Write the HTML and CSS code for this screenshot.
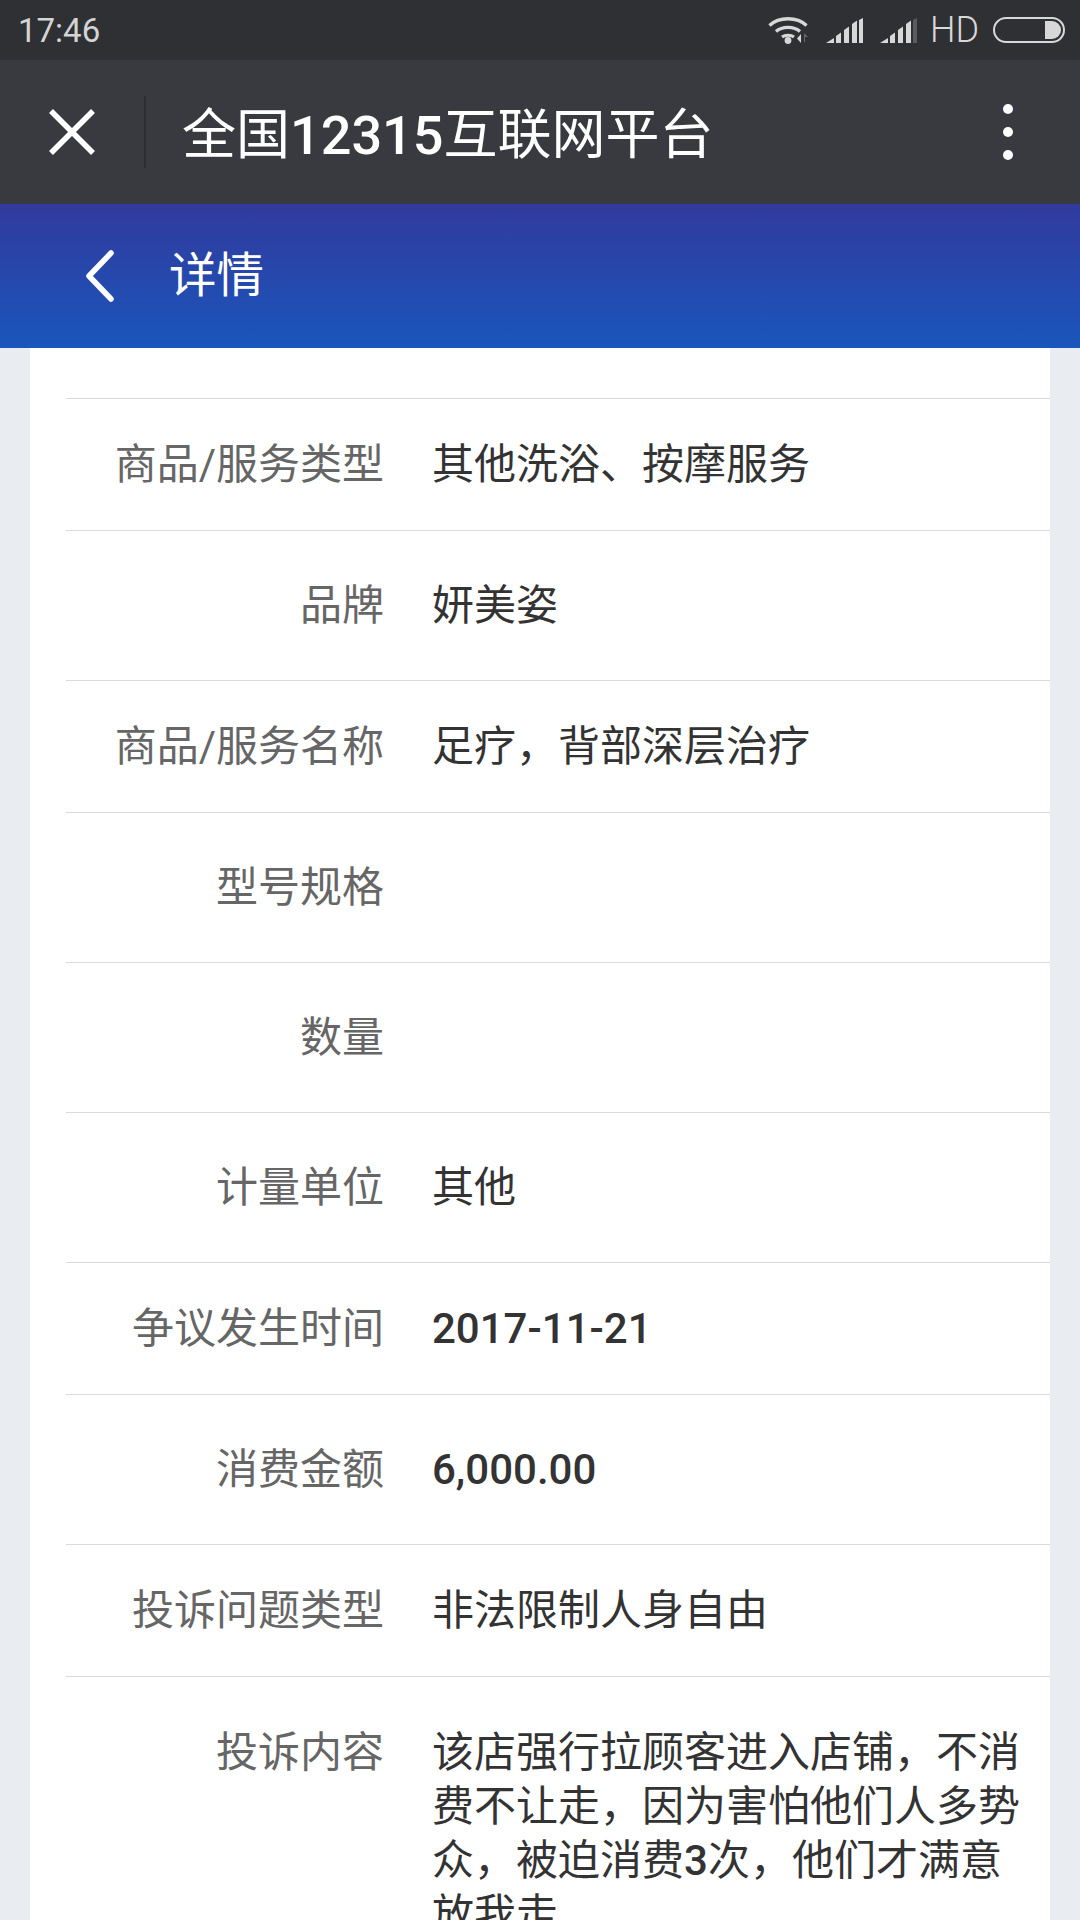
FILE: index.html
```html
<!DOCTYPE html>
<html>
<head>
<meta charset="utf-8"/>
<title>详情</title>
<link rel="stylesheet" href="styles.css">
</head>
<body>
<div class="status">
	<span class="clock">17:46</span>
	<div class="status-right">
		<svg class="wifi" width="41" height="28" viewBox="0 0 41 28">
			<path d="M1.5 9.5C11 .5 29 .5 38.5 9.500" fill="none" stroke="#d8d8d8" stroke-width="3.400"/>
			<path d="M8 15.500C14 10 26 10 32 15.500" fill="none" stroke="#d8d8d8" stroke-width="3.400"/>
			<path d="M14 21C17 18.500 23 18.500 26 21" fill="none" stroke="#d8d8d8" stroke-width="3"/>
			<circle cx="20" cy="24.500" r="3.400" fill="#d8d8d8"/>
			<path d="M33 18v9l-4-4.500z" fill="#d8d8d8"/>
			<path d="M36 17v9h1v-5h3z" fill="#666"/>
		</svg>
		<svg class="signal" width="37" height="25" viewBox="0 0 37 25">
			<path d="M0 25 8 20v5zM10 25V18l5-3.500V25zM18 25V12l5-3.500V25zM26 25V6l5-3.500V25z" fill="#d8d8d8"/>
			<path d="M33 25V2l4-2V25z" fill="#d8d8d8"/>
		</svg>
		<svg class="signal" width="37" height="25" viewBox="0 0 37 25">
			<path d="M0 25 8 20v5zM10 25V18l5-3.500V25zM18 25V12l5-3.500V25zM26 25V6l5-3.500V25z" fill="#d8d8d8"/>
			<path d="M33 25V2l4-2V25z" fill="#5a5b5e"/>
		</svg>
		<span class="hd">HD</span>
		<div class="battery"><div class="battery-level"></div></div>
	</div>
</div>
<div class="toolbar">
	<svg class="close" width="46" height="46" viewBox="0 0 46 46">
		<path d="M2 2 44 44M44 2 2 44" stroke="#fff" stroke-width="5.500" fill="none"/>
	</svg>
	<div class="divider"></div>
	<div class="title">全国<b>12315</b>互联网平台</div>
	<div class="more"><i></i><i></i><i></i></div>
</div>
<div class="subbar">
	<svg class="back" width="30" height="52" viewBox="0 0 30 52">
		<path d="M26 3 4 26 26 49" stroke="#fff" stroke-width="5.500" stroke-linecap="round" stroke-linejoin="round" fill="none"/>
	</svg>
	<div class="subtitle">详情</div>
</div>
<main class="card">
	<div class="spacer"></div>
	<div class="row short">
		<div class="label">商品/服务类型</div>
		<div class="value">其他洗浴、按摩服务</div>
	</div>
	<div class="row">
		<div class="label">品牌</div>
		<div class="value">妍美姿</div>
	</div>
	<div class="row short">
		<div class="label">商品/服务名称</div>
		<div class="value">足疗，背部深层治疗</div>
	</div>
	<div class="row">
		<div class="label">型号规格</div>
		<div class="value"></div>
	</div>
	<div class="row">
		<div class="label">数量</div>
		<div class="value"></div>
	</div>
	<div class="row">
		<div class="label">计量单位</div>
		<div class="value">其他</div>
	</div>
	<div class="row short">
		<div class="label">争议发生时间</div>
		<div class="value"><b>2017-11-21</b></div>
	</div>
	<div class="row">
		<div class="label">消费金额</div>
		<div class="value"><b>6,000.00</b></div>
	</div>
	<div class="row short">
		<div class="label">投诉问题类型</div>
		<div class="value">非法限制人身自由</div>
	</div>
	<div class="row long">
		<div class="label">投诉内容</div>
		<div class="value">该店强行拉顾客进入店铺，不消费不让走，因为害怕他们人多势众，被迫消费<b>3</b>次，他们才满意放我走</div>
	</div>
</main>
</body>
</html>
```

FILE: styles.css
```css
html, body {
	margin: 0;
	height: 1920px;
	overflow: hidden;
}
body {
	font-family: Roboto, "Noto Sans CJK SC", sans-serif;
	background-color: #e9edf2;
}
b {
	font-weight: 500;
}

.status {
	height: 60px;
	background-color: #2f3034;
	display: flex;
	align-items: center;
	justify-content: space-between;
	padding: 0 15px 0 18px;
}
.clock {
	font-size: 33px;
	color: #d4d4d4;
	padding-top: 1px;
}
.status-right {
	display: flex;
	align-items: center;
}
.wifi {
	margin-right: 17px;
}
.signal {
	margin-right: 17px;
}
.signal + .signal {
	margin-right: 13px;
}
.hd {
	font-size: 36px;
	font-weight: 300;
	color: #d8d8d8;
	margin-right: 14px;
}
.battery {
	width: 66px;
	height: 22px;
	border: 2px solid #d8d8d8;
	border-radius: 13px;
	display: flex;
	justify-content: flex-end;
	align-items: center;
	padding-right: 2px;
}
.battery-level {
	width: 16px;
	height: 18px;
	background-color: #d8d8d8;
	border-radius: 0 9px 9px 0;
}

.toolbar {
	height: 144px;
	background-color: #393a3f;
	display: flex;
	align-items: center;
	padding-left: 49px;
	padding-right: 67px;
}
.close {
	margin-right: 49px;
}
.divider {
	width: 2px;
	height: 72px;
	background-color: #2d2e32;
	margin-right: 36px;
}
.title {
	flex: 1;
	font-size: 54px;
	color: #fff;
	white-space: nowrap;
	margin-bottom: 4px;
}
.more {
	display: flex;
	flex-direction: column;
	gap: 13px;
}
.more i {
	display: block;
	width: 10px;
	height: 10px;
	border-radius: 50%;
	background-color: #fff;
}

.subbar {
	height: 144px;
	background: linear-gradient(#323a9d, #1a56bc);
	display: flex;
	align-items: center;
	padding-left: 85px;
}
.back {
	margin-right: 54px;
}
.subtitle {
	font-size: 47.5px;
	color: #fff;
	margin-bottom: 10px;
}

.card {
	margin: 0 30px;
	height: 1572px;
	overflow: hidden;
	background-color: #fff;
	padding-left: 36px;
}
.spacer {
	height: 50px;
}
.row {
	box-sizing: border-box;
	height: 150px;
	border-top: 1px solid #dadada;
	display: flex;
	align-items: center;
	font-size: 42px;
	line-height: 54px;
}
.row.short {
	height: 132px;
}
.row.long {
	height: auto;
	align-items: flex-start;
	padding-top: 49px;
}
.label {
	width: 318px;
	text-align: right;
	color: #666;
	flex-shrink: 0;
}
.value {
	width: 600px;
	margin-left: 48px;
	color: #333;
}
```
